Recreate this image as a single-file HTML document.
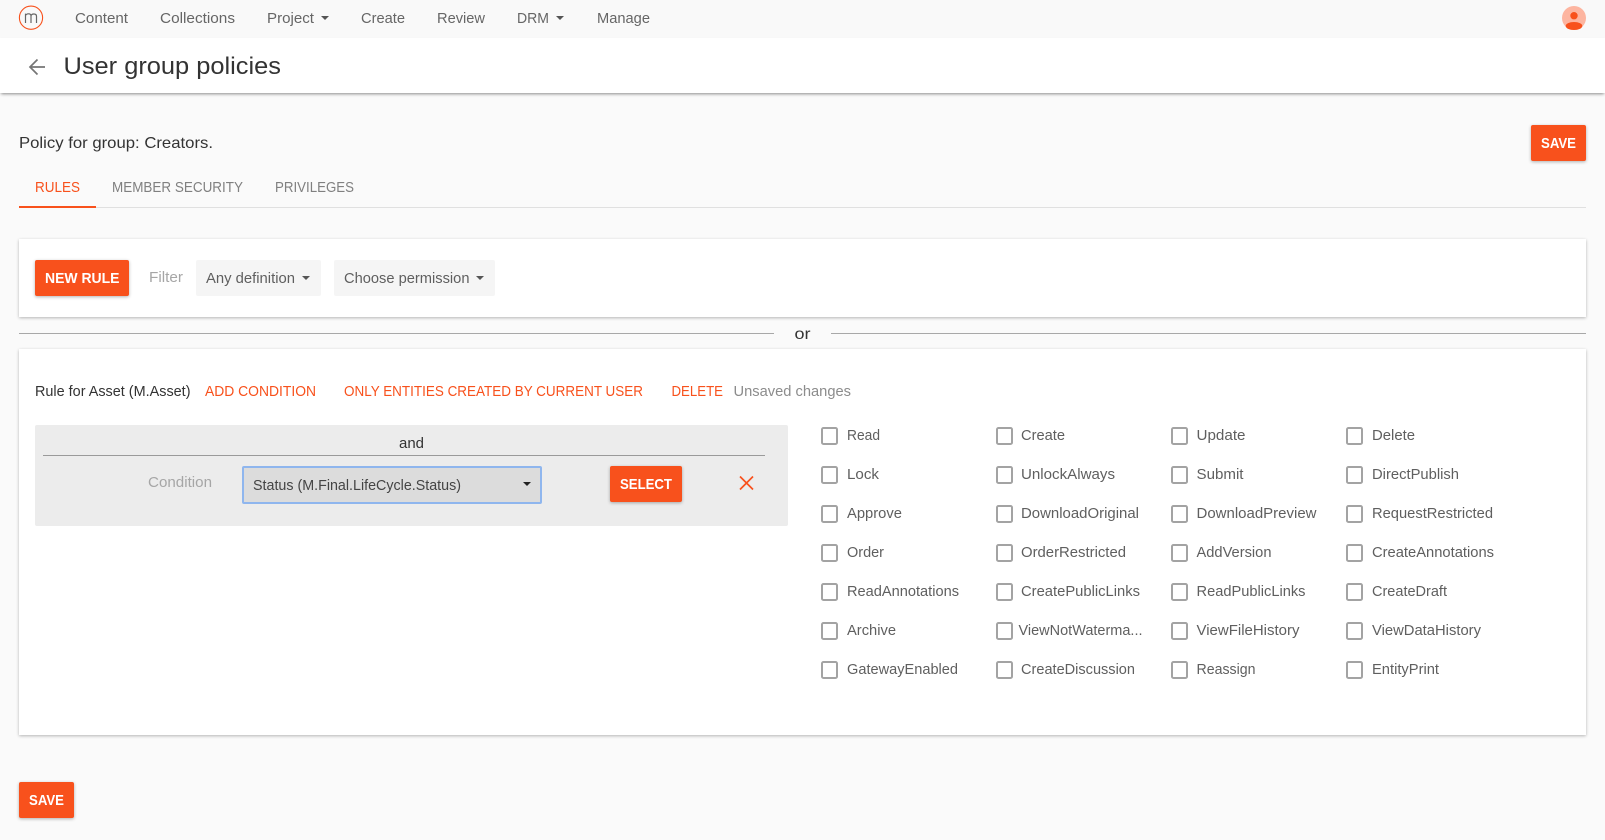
<!DOCTYPE html>
<html lang="en">
<head>
<meta charset="utf-8">
<title>User group policies</title>
<style>
html,body{margin:0;padding:0;width:1605px;height:840px;overflow:hidden;background:#fafafa}
.b{position:absolute;box-sizing:border-box}
.card{background:#fff;box-shadow:0 1px 3px rgba(0,0,0,.28)}
.btn{background:#f8511c;border-radius:2px;box-shadow:0 1px 3px rgba(0,0,0,.3)}
.dd{background:#f5f5f5;border-radius:2px}
.cb{width:17.5px;height:17.5px;border:2px solid #a3a3a3;border-radius:2.5px;background:#fff}
svg{position:absolute;left:0;top:0}
text{font-family:"Liberation Sans",sans-serif;font-size:14.5px;fill:#666}
.o{fill:#f8511c}
.d{fill:#333}
.w{fill:#fff;font-weight:bold;font-size:15px}
.g{fill:#a6a6a6}
.l{fill:#5f5f5f}
</style>
</head>
<body>
<div class="b" style="left:0;top:0;width:1605px;height:38px;background:#f9f9f9"></div>
<div class="b" style="left:0;top:38px;width:1605px;height:55px;background:#fff;box-shadow:0 2px 3px -1px rgba(0,0,0,.45)"></div>

<div class="b" style="left:19px;top:207px;width:1567px;height:1px;background:#e0e0e0"></div>
<div class="b" style="left:19px;top:206px;width:77px;height:2px;background:#f8511c"></div>
<div class="b btn" style="left:1531px;top:125px;width:55px;height:36px"></div>

<div class="b card" style="left:19px;top:239px;width:1567px;height:78px"></div>
<div class="b btn" style="left:35px;top:260px;width:94px;height:36px"></div>
<div class="b dd" style="left:196px;top:260px;width:125px;height:36px"></div>
<div class="b dd" style="left:334px;top:260px;width:161px;height:36px"></div>

<div class="b" style="left:19px;top:333px;width:755px;height:1px;background:#a8a8a8"></div>
<div class="b" style="left:831px;top:333px;width:755px;height:1px;background:#a8a8a8"></div>

<div class="b card" style="left:19px;top:349px;width:1567px;height:386px"></div>
<div class="b" style="left:35px;top:425px;width:753px;height:101px;background:#ececec;border-radius:2px"></div>
<div class="b" style="left:43px;top:455px;width:722px;height:1px;background:#9a9a9a"></div>
<div class="b" style="left:242px;top:466px;width:299.5px;height:37.5px;background:#dcdcdc;border:2px solid #8fb6ee;border-radius:2px"></div>
<div class="b btn" style="left:610px;top:466px;width:72px;height:36px"></div>
<div class="b btn" style="left:19px;top:782px;width:55px;height:36px"></div>

<div class="b cb" style="left:820.8px;top:427.4px"></div><div class="b cb" style="left:995.8px;top:427.4px"></div><div class="b cb" style="left:1170.8px;top:427.4px"></div><div class="b cb" style="left:1345.8px;top:427.4px"></div>
<div class="b cb" style="left:820.8px;top:466.4px"></div><div class="b cb" style="left:995.8px;top:466.4px"></div><div class="b cb" style="left:1170.8px;top:466.4px"></div><div class="b cb" style="left:1345.8px;top:466.4px"></div>
<div class="b cb" style="left:820.8px;top:505.4px"></div><div class="b cb" style="left:995.8px;top:505.4px"></div><div class="b cb" style="left:1170.8px;top:505.4px"></div><div class="b cb" style="left:1345.8px;top:505.4px"></div>
<div class="b cb" style="left:820.8px;top:544.4px"></div><div class="b cb" style="left:995.8px;top:544.4px"></div><div class="b cb" style="left:1170.8px;top:544.4px"></div><div class="b cb" style="left:1345.8px;top:544.4px"></div>
<div class="b cb" style="left:820.8px;top:583.4px"></div><div class="b cb" style="left:995.8px;top:583.4px"></div><div class="b cb" style="left:1170.8px;top:583.4px"></div><div class="b cb" style="left:1345.8px;top:583.4px"></div>
<div class="b cb" style="left:820.8px;top:622.4px"></div><div class="b cb" style="left:995.8px;top:622.4px"></div><div class="b cb" style="left:1170.8px;top:622.4px"></div><div class="b cb" style="left:1345.8px;top:622.4px"></div>
<div class="b cb" style="left:820.8px;top:661.4px"></div><div class="b cb" style="left:995.8px;top:661.4px"></div><div class="b cb" style="left:1170.8px;top:661.4px"></div><div class="b cb" style="left:1345.8px;top:661.4px"></div>

<svg width="1605" height="840" viewBox="0 0 1605 840" xmlns="http://www.w3.org/2000/svg">
<g fill="none">
<circle cx="31" cy="17.7" r="11.6" stroke="#f8511c" stroke-width="1.1"/>
<path d="M25.5 23V13.6M25.5 15.6C26.4 13.4 30.8 13 31 15.8V23M31 15.8C31.7 13.2 36.5 13.4 36.5 16.2V23" stroke="#666" stroke-width="1.2"/>
<path d="M45 67H30M37.5 59.5L30 67L37.5 74.5" stroke="#757575" stroke-width="1.7"/>
<path d="M740 476.5L753 489.5M753 476.5L740 489.5" stroke="#f8511c" stroke-width="1.7"/>
</g>
<circle cx="1574" cy="18" r="12" fill="#fdb5a0"/>
<circle cx="1574" cy="15.7" r="3.7" fill="#f8511c"/>
<ellipse cx="1574" cy="26" rx="8.3" ry="4" fill="#f8511c"/>
<g fill="#555">
<path d="M321 16H329L325 20Z"/>
<path d="M556 16H564L560 20Z"/>
<path d="M302 276H310L306 280Z"/>
<path d="M476 276H484L480 280Z"/>
<path d="M523 482H531L527 486Z" fill="#222"/>
</g>

<text x="75" y="23" textLength="53" lengthAdjust="spacingAndGlyphs">Content</text>
<text x="160" y="23" textLength="75" lengthAdjust="spacingAndGlyphs">Collections</text>
<text x="267" y="23" textLength="47" lengthAdjust="spacingAndGlyphs">Project</text>
<text x="361" y="23" textLength="44" lengthAdjust="spacingAndGlyphs">Create</text>
<text x="437" y="23" textLength="48" lengthAdjust="spacingAndGlyphs">Review</text>
<text x="517" y="23" textLength="32" lengthAdjust="spacingAndGlyphs">DRM</text>
<text x="597" y="23" textLength="53" lengthAdjust="spacingAndGlyphs">Manage</text>

<text x="63.5" y="74" textLength="217.5" lengthAdjust="spacingAndGlyphs" style="font-size:24px;fill:#333">User group policies</text>
<text x="19" y="148" textLength="194" lengthAdjust="spacingAndGlyphs" class="d" style="font-size:16px">Policy for group: Creators.</text>
<text x="1541" y="148" textLength="35" lengthAdjust="spacingAndGlyphs" class="w">SAVE</text>

<text x="35" y="192" textLength="45" lengthAdjust="spacingAndGlyphs" class="o">RULES</text>
<text x="112" y="192" textLength="131" lengthAdjust="spacingAndGlyphs" style="fill:#808080">MEMBER SECURITY</text>
<text x="275" y="192" textLength="79" lengthAdjust="spacingAndGlyphs" style="fill:#808080">PRIVILEGES</text>

<text x="45" y="283" textLength="74.5" lengthAdjust="spacingAndGlyphs" class="w">NEW RULE</text>
<text x="149" y="282" textLength="34" lengthAdjust="spacingAndGlyphs" class="g">Filter</text>
<text x="206" y="283" textLength="89" lengthAdjust="spacingAndGlyphs" class="l">Any definition</text>
<text x="344" y="283" textLength="125.5" lengthAdjust="spacingAndGlyphs" class="l">Choose permission</text>
<text x="794.5" y="339" textLength="16" lengthAdjust="spacingAndGlyphs" class="d" style="font-size:16px">or</text>

<text x="35" y="396" textLength="155.5" lengthAdjust="spacingAndGlyphs" class="d">Rule for Asset (M.Asset)</text>
<text x="205" y="396" textLength="111" lengthAdjust="spacingAndGlyphs" class="o">ADD CONDITION</text>
<text x="344" y="396" textLength="299" lengthAdjust="spacingAndGlyphs" class="o">ONLY ENTITIES CREATED BY CURRENT USER</text>
<text x="671.5" y="396" textLength="51.5" lengthAdjust="spacingAndGlyphs" class="o">DELETE</text>
<text x="733.5" y="396" textLength="117.5" lengthAdjust="spacingAndGlyphs" style="fill:#8c8c8c">Unsaved changes</text>

<text x="399" y="448" textLength="25" lengthAdjust="spacingAndGlyphs" class="d">and</text>
<text x="148" y="487" textLength="64" lengthAdjust="spacingAndGlyphs" class="g">Condition</text>
<text x="253" y="490" textLength="208" lengthAdjust="spacingAndGlyphs" style="fill:#444">Status (M.Final.LifeCycle.Status)</text>
<text x="620" y="489" textLength="52" lengthAdjust="spacingAndGlyphs" class="w">SELECT</text>

<g class="labels">
<text class="l" x="847" y="440" textLength="33" lengthAdjust="spacingAndGlyphs">Read</text>
<text class="l" x="1021" y="440" textLength="44" lengthAdjust="spacingAndGlyphs">Create</text>
<text class="l" x="1196.5" y="440" textLength="49" lengthAdjust="spacingAndGlyphs">Update</text>
<text class="l" x="1372" y="440" textLength="43" lengthAdjust="spacingAndGlyphs">Delete</text>

<text class="l" x="847" y="479" textLength="32" lengthAdjust="spacingAndGlyphs">Lock</text>
<text class="l" x="1021" y="479" textLength="94" lengthAdjust="spacingAndGlyphs">UnlockAlways</text>
<text class="l" x="1196.5" y="479" textLength="47" lengthAdjust="spacingAndGlyphs">Submit</text>
<text class="l" x="1372" y="479" textLength="87" lengthAdjust="spacingAndGlyphs">DirectPublish</text>

<text class="l" x="847" y="518" textLength="55" lengthAdjust="spacingAndGlyphs">Approve</text>
<text class="l" x="1021" y="518" textLength="118" lengthAdjust="spacingAndGlyphs">DownloadOriginal</text>
<text class="l" x="1196.5" y="518" textLength="120" lengthAdjust="spacingAndGlyphs">DownloadPreview</text>
<text class="l" x="1372" y="518" textLength="121" lengthAdjust="spacingAndGlyphs">RequestRestricted</text>

<text class="l" x="847" y="557" textLength="37" lengthAdjust="spacingAndGlyphs">Order</text>
<text class="l" x="1021" y="557" textLength="105" lengthAdjust="spacingAndGlyphs">OrderRestricted</text>
<text class="l" x="1196.5" y="557" textLength="75" lengthAdjust="spacingAndGlyphs">AddVersion</text>
<text class="l" x="1372" y="557" textLength="122" lengthAdjust="spacingAndGlyphs">CreateAnnotations</text>

<text class="l" x="847" y="596" textLength="112" lengthAdjust="spacingAndGlyphs">ReadAnnotations</text>
<text class="l" x="1021" y="596" textLength="119" lengthAdjust="spacingAndGlyphs">CreatePublicLinks</text>
<text class="l" x="1196.5" y="596" textLength="109" lengthAdjust="spacingAndGlyphs">ReadPublicLinks</text>
<text class="l" x="1372" y="596" textLength="75" lengthAdjust="spacingAndGlyphs">CreateDraft</text>

<text class="l" x="847" y="635" textLength="49" lengthAdjust="spacingAndGlyphs">Archive</text>
<text class="l" x="1018.5" y="635" textLength="124" lengthAdjust="spacingAndGlyphs">ViewNotWaterma...</text>
<text class="l" x="1196.5" y="635" textLength="103" lengthAdjust="spacingAndGlyphs">ViewFileHistory</text>
<text class="l" x="1372" y="635" textLength="109" lengthAdjust="spacingAndGlyphs">ViewDataHistory</text>

<text class="l" x="847" y="674" textLength="111" lengthAdjust="spacingAndGlyphs">GatewayEnabled</text>
<text class="l" x="1021" y="674" textLength="114" lengthAdjust="spacingAndGlyphs">CreateDiscussion</text>
<text class="l" x="1196.5" y="674" textLength="59" lengthAdjust="spacingAndGlyphs">Reassign</text>
<text class="l" x="1372" y="674" textLength="67" lengthAdjust="spacingAndGlyphs">EntityPrint</text>
</g>

<text x="29" y="805" textLength="35" lengthAdjust="spacingAndGlyphs" class="w">SAVE</text>
</svg>
</body>
</html>
